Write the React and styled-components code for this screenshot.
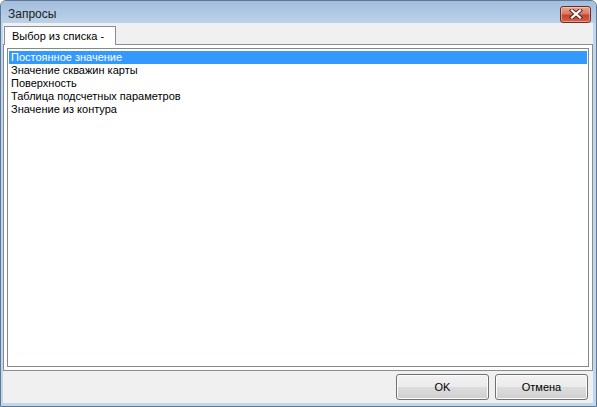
import React from "react";
import styled, { createGlobalStyle } from "styled-components";

const Global = createGlobalStyle`
  html, body { margin: 0; padding: 0; background: #fff; }
  body { font-family: "Liberation Sans", Arial, sans-serif; font-size: 11px; }
`;

const Window = styled.div`
  box-sizing: border-box;
  width: 597px;
  height: 407px;
  display: flex;
  flex-direction: column;
  border: 1px solid #5b7897;
  border-radius: 6px 6px 0 0;
  background: #c3d7ec;
  padding: 0 3px 3px 2px;
  overflow: hidden;
`;

const TitleBar = styled.div`
  height: 22px;
  margin: 0 -3px 0 -2px;
  padding: 0 5px 0 7px;
  display: flex;
  align-items: center;
  justify-content: space-between;
  background: linear-gradient(#a3bddb, #bcd2ea);
`;

const Title = styled.span`
  font-size: 12px;
  color: #1b1b1b;
  padding-top: 4px;
`;

const CloseButton = styled.div`
  box-sizing: border-box;
  width: 31px;
  height: 17px;
  margin-top: 4px;
  border: 1px solid #6d2c23;
  border-radius: 3px;
  background: linear-gradient(#e9a796 0%, #d97a63 45%, #c8432a 55%, #d0624a 100%);
  display: flex;
  align-items: center;
  justify-content: center;
  box-shadow: inset 0 0 0 1px rgba(255, 220, 210, 0.5);
`;

const Client = styled.div`
  flex: 1;
  display: flex;
  flex-direction: column;
  background: #f0f0f0;
`;

const TabStrip = styled.div`
  height: 21px;
  display: flex;
  align-items: flex-end;
  padding-left: 1px;
`;

const Tab = styled.div`
  box-sizing: border-box;
  width: 112px;
  height: 19px;
  margin-bottom: -1px;
  border: 1px solid #898c95;
  border-bottom: none;
  background: #fff;
  padding: 3px 0 0 7px;
  color: #000;
  position: relative;
  z-index: 1;
`;

const Panel = styled.div`
  box-sizing: border-box;
  height: 327px;
  border: 1px solid #898c95;
  background: #fff;
  padding: 3px;
  display: flex;
`;

const ListBox = styled.div`
  box-sizing: border-box;
  flex: 1;
  border: 1px solid #828790;
  background: #fff;
  padding: 2px 1px;
`;

const Item = styled.div`
  height: 13px;
  line-height: 13px;
  padding-left: 2px;
  color: ${(p) => (p.$selected ? "#fff" : "#000")};
  background: ${(p) => (p.$selected ? "#3399ff" : "transparent")};
  white-space: nowrap;
`;

const ButtonRow = styled.div`
  flex: 1;
  display: flex;
  justify-content: flex-end;
  align-items: flex-start;
  gap: 6px;
  padding: 3px 5px 0 0;
`;

const Button = styled.div`
  box-sizing: border-box;
  width: 93px;
  height: 26px;
  border: 1px solid #707070;
  border-radius: 3px;
  background: linear-gradient(#f2f2f2 0%, #ebebeb 50%, #dddddd 50%, #cfcfcf 100%);
  box-shadow: inset 0 0 0 1px #fcfcfc;
  display: flex;
  align-items: center;
  justify-content: center;
  color: #000;
  font-size: 11px;
`;

const items = [
  "Постоянное значение",
  "Значение скважин карты",
  "Поверхность",
  "Таблица подсчетных параметров",
  "Значение из контура",
];

const CloseGlyph = () => (
  <svg width="14" height="10" viewBox="0 0 14 10">
    <path
      d="M3 1.5 L11 8.5 M11 1.5 L3 8.5"
      stroke="#5a2a22"
      strokeWidth="4.2"
      strokeLinecap="square"
    />
    <path
      d="M3 1.5 L11 8.5 M11 1.5 L3 8.5"
      stroke="#fff"
      strokeWidth="2.2"
      strokeLinecap="square"
    />
  </svg>
);

export default function App() {
  return (
    <>
      <Global />
      <Window>
        <TitleBar>
          <Title>Запросы</Title>
          <CloseButton>
            <CloseGlyph />
          </CloseButton>
        </TitleBar>
        <Client>
          <TabStrip>
            <Tab>Выбор из списка -</Tab>
          </TabStrip>
          <Panel>
            <ListBox>
              {items.map((t, i) => (
                <Item key={t} $selected={i === 0}>
                  {t}
                </Item>
              ))}
            </ListBox>
          </Panel>
          <ButtonRow>
            <Button>OK</Button>
            <Button>Отмена</Button>
          </ButtonRow>
        </Client>
      </Window>
    </>
  );
}
